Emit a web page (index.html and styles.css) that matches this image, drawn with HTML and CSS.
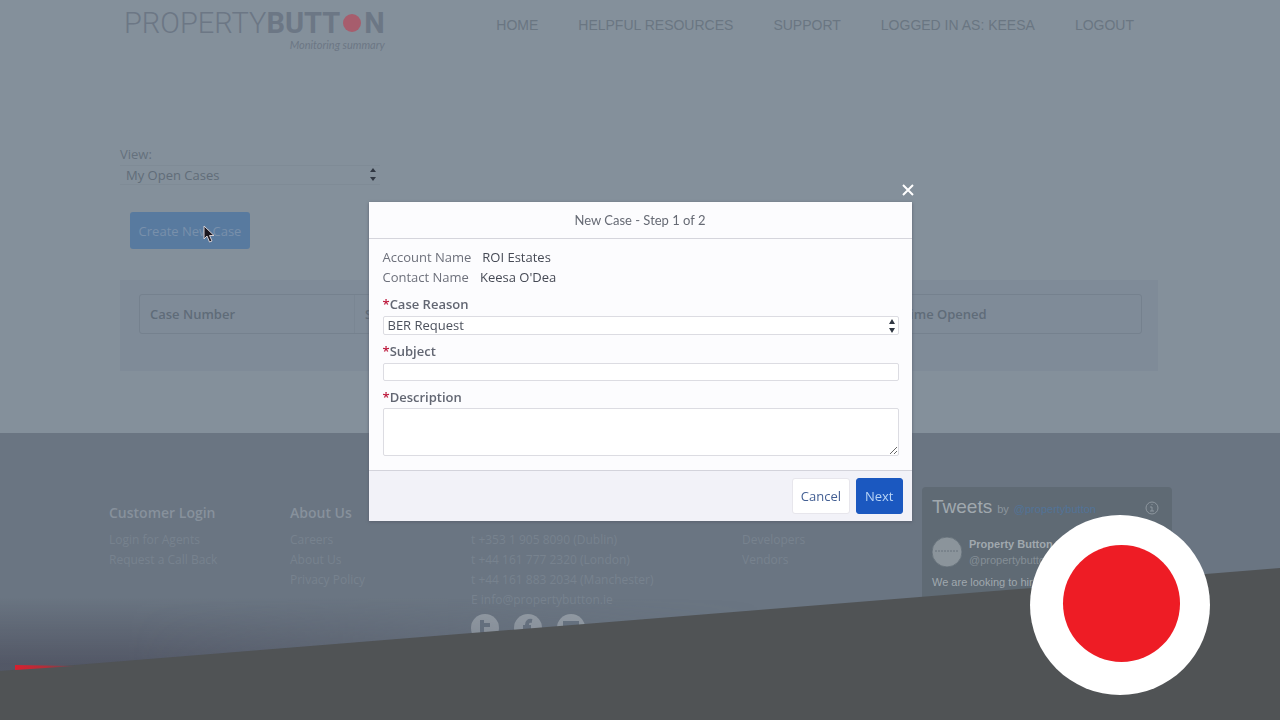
FILE: index.html
```html
<!DOCTYPE html>
<html lang="en">
<head>
<meta charset="utf-8">
<meta name="viewport" content="width=device-width, initial-scale=1">
<title>Property Button – New Case</title>
<link rel="stylesheet" href="styles.css">
</head>
<body>
<div class="page">
  <header class="wrap site-header">
    <a class="logo" href="#">
      <span class="logo-name"><span class="logo-light">PROPERTY</span><span class="logo-bold">BUTT</span><svg class="logo-dot" viewBox="0 0 24 24" aria-hidden="true"><circle cx="12" cy="12" r="9"/></svg><span class="logo-bold">N</span></span>
      <span class="logo-tag">Monitoring summary</span>
    </a>
    <nav class="nav">
      <a href="#">HOME</a><a href="#">HELPFUL RESOURCES</a><a href="#">SUPPORT</a><a href="#">LOGGED IN AS: KEESA</a><a href="#">LOGOUT</a>
    </nav>
  </header>

  <main class="wrap main">
    <label class="view-label" for="view">View:</label>
    <div class="select-box view-box">
      <select id="view" class="view-select"><option>My Open Cases</option></select>
      <svg class="arrows" viewBox="0 0 8 16" aria-hidden="true"><path d="M4 2l3 4H1zM4 15l3-4H1z"/></svg>
    </div>
    <div class="create-row">
      <button class="create" type="button">Create New Case</button>
      <svg class="cursor" viewBox="0 0 12 18" aria-hidden="true"><path d="M1 1v13l3-3 2.500 6 2.500-1-2.500-5.500H11z"/></svg>
    </div>
    <section class="panel">
      <table class="cases">
        <thead><tr><th class="col-number">Case Number</th><th class="col-subject">Subject</th><th>Date/Time Opened</th></tr></thead>
      </table>
    </section>
  </main>

  <footer class="footer">
    <div class="wrap footer-grid">
      <section>
        <h2>Customer Login</h2>
        <ul><li><a href="#">Login for Agents</a></li><li><a href="#">Request a Call Back</a></li></ul>
      </section>
      <section>
        <h2>About Us</h2>
        <ul><li><a href="#">Careers</a></li><li><a href="#">About Us</a></li><li><a href="#">Privacy Policy</a></li></ul>
      </section>
      <section class="untitled">
        <ul><li>t +353 1 905 8090 (Dublin)</li><li>t +44 161 777 2320 (London)</li><li>t +44 161 883 2034 (Manchester)</li><li>E info@propertybutton.ie</li></ul>
        <div class="social">
          <svg viewBox="0 0 28 28" aria-hidden="true"><circle class="disc" cx="14" cy="14" r="14"/><path class="mark" d="M11 6v11q0 4 4 4h4M11 11h8"/></svg>
          <svg viewBox="0 0 28 28" aria-hidden="true"><circle class="disc" cx="14" cy="14" r="14"/><path class="mark" d="M18 7q-5-1-5 4v11M9 13h8"/></svg>
          <svg viewBox="0 0 28 28" aria-hidden="true"><circle class="disc" cx="14" cy="14" r="14"/><path class="mark" d="M8 9h12v11H8zM8 9l6 5 6-5"/></svg>
        </div>
      </section>
      <section class="untitled">
        <ul><li><a href="#">Developers</a></li><li><a href="#">Vendors</a></li></ul>
      </section>
      <aside class="tweets">
        <div class="tweets-head">
          <span class="tweets-title">Tweets</span><span class="by">by</span><a class="handle" href="#">@propertybutton</a>
          <svg class="info" viewBox="0 0 14 14" aria-hidden="true"><circle cx="7" cy="7" r="6"/><path d="M7 3v1M5 6h2v4M5 10h4"/></svg>
        </div>
        <div class="author">
          <svg class="avatar" viewBox="0 0 30 30" aria-hidden="true"><circle cx="15" cy="15" r="15"/><path d="M3 14h24" stroke-dasharray="2 1"/></svg>
          <div><strong>Property Button</strong><span>@propertybutton</span></div>
        </div>
        <p>We are looking to hire</p>
      </aside>
    </div>
  </footer>
</div>

<div class="backdrop">
  <form class="modal" role="dialog" aria-labelledby="modal-title">
    <button class="close" type="button" aria-label="Close"><svg viewBox="0 0 14 14" aria-hidden="true"><path d="M2 2l10 10M12 2L2 12"/></svg></button>
    <header class="modal-head"><h1 id="modal-title">New Case - Step 1 of 2</h1></header>
    <div class="modal-body">
      <dl class="facts">
        <div><dt>Account Name</dt><dd>ROI Estates</dd></div>
        <div><dt>Contact Name</dt><dd>Keesa O'Dea</dd></div>
      </dl>
      <label for="reason"><span class="req">*</span>Case Reason</label>
      <div class="select-box">
        <select id="reason" class="field"><option>BER Request</option></select>
        <svg class="arrows" viewBox="0 0 8 16" aria-hidden="true"><path d="M4 1l3 5H1zM4 15l3-5H1z"/></svg>
      </div>
      <label for="subject"><span class="req">*</span>Subject</label>
      <input id="subject" class="field" type="text">
      <label for="description"><span class="req">*</span>Description</label>
      <textarea id="description" class="field area"></textarea>
    </div>
    <footer class="modal-foot">
      <button class="btn" type="button">Cancel</button>
      <button class="btn primary" type="button">Next</button>
    </footer>
  </form>
</div>

<div class="banner" aria-hidden="true">
  <div class="shade"></div>
  <svg class="wedge" viewBox="0 0 1280 152" preserveAspectRatio="none">
    <defs><linearGradient id="streak"><stop offset="0" stop-color="#d81f2e"/><stop offset=".5" stop-color="#b02f3a"/><stop offset="1" stop-color="#59505a"/></linearGradient></defs>
    <path d="M0 103L1280 0V152H0z" fill="#505355"/>
    <path d="M15 97L76 98L15 102z" fill="url(#streak)"/>
  </svg>
  <svg class="record" viewBox="0 0 180 180"><circle cx="90" cy="90" r="90" fill="#fff"/><circle cx="91.500" cy="88.500" r="58.500" fill="#ee1c25"/></svg>
</div>
</body>
</html>
```
FILE: styles.css
```css
* { box-sizing: border-box; }
body { margin: 0; background: #84909b; color: #65717d; font: 13px/20px "Open Sans", "Noto Sans", sans-serif; }
a { color: inherit; text-decoration: none; }
h1, h2, p, ul, dl, dd { margin: 0; padding: 0; }
ul { list-style: none; }
button, input, select, textarea { font: inherit; color: inherit; }

.page { height: 100vh; overflow: hidden; display: flex; flex-direction: column; }
.wrap { width: 100%; max-width: 1064px; margin: 0 auto; }

.site-header { display: flex; justify-content: space-between; align-items: flex-start; padding: 6px 38px 0 16px; }
.logo { display: flex; flex-direction: column; color: #6c7785; }
.logo-name { display: flex; align-items: center; font: 29px/34px Roboto, sans-serif; }
.logo-light { font-weight: 300; }
.logo-bold { font-weight: 700; }
.logo-dot { width: 24px; height: 24px; fill: #a75d6d; }
.logo-tag { align-self: flex-end; font: italic 11px/10px Lato, sans-serif; }
.nav { display: flex; gap: 40px; padding-top: 9px; font: 14px/20px "Liberation Sans", Arial, sans-serif; color: #6a7682; }

.main { padding: 94px 14px 62px 12px; }
.view-label { display: block; }
.select-box { position: relative; }
.view-box { width: 260px; padding-top: 1px; }
select { appearance: none; }
.view-select { display: block; width: 100%; height: 20px; padding: 0 6px; border: 1px solid #7f8b96; border-width: 1px 0; background: none; line-height: 18px; color: #616d79; }
.arrows { position: absolute; right: 3px; top: 2px; width: 8px; height: 16px; fill: #303742; pointer-events: none; }
.create-row { position: relative; padding: 27px 10px 31px; }
.create { display: block; width: 120px; height: 37px; padding: 0; border: 0; border-radius: 3px; background: #587a9f; color: #7890ab; }
.cursor { position: absolute; left: 83px; top: 40px; width: 12px; height: 18px; fill: #1b1720; stroke: #d5cfd3; }
.panel { padding: 14px 16px 37px 19px; background: #7f8b98; }
.cases { width: 100%; height: 40px; border: 1px solid #75818e; border-radius: 3px; border-spacing: 0; table-layout: fixed; }
.cases th { padding: 0 10px; text-align: left; font-weight: 600; color: #5f6c79; }
.col-number { width: 215px; border-right: 1px solid #7a8693; }
.col-subject { width: 503px; }

.footer { flex: 1; background: #6a7582; color: #77828e; }
.footer-grid { display: grid; grid-template-columns: 181fr 181fr 271fr 181fr 250fr; padding: 54px 0 0; }
.footer-grid section { padding: 16px 1px 0; }
.footer-grid .untitled { padding-top: 43px; }
h2 { margin-bottom: 7px; font-size: 14px; font-weight: 600; line-height: 20px; color: #87919c; }
.footer li { font-size: 12px; line-height: 20px; }
.social { display: flex; gap: 15px; padding-top: 4px; }
.social svg { width: 28px; height: 28px; }
.disc { fill: #949da6; }
.mark { fill: none; stroke: #687482; stroke-width: 4; }
.tweets { height: 160px; padding: 8px 10px; border-radius: 4px; background: #5f6a74; font: 11px/16px "Liberation Sans", Arial, sans-serif; color: #a0a8ae; }
.tweets-head { display: flex; align-items: baseline; gap: 5px; line-height: 24px; }
.tweets-title { font-size: 19px; }
.by { color: #8b959d; }
.handle { color: #527397; }
.info { width: 14px; height: 14px; margin: 0 3px 0 auto; align-self: center; fill: none; stroke: #8d969e; }
.author { display: flex; align-items: center; gap: 7px; padding: 15px 0 6px; }
.author strong, .author span { display: block; }
.author span { color: #848e96; }
.avatar { width: 30px; height: 30px; fill: #8b949b; stroke: #68737c; }
.tweets p { white-space: nowrap; }

.backdrop { position: fixed; inset: 0 0 -3px; display: grid; place-items: center; }
.modal { position: relative; width: min(543px, 94vw); background: #fcfcfe; box-shadow: 0 1px 3px #59606e; color: #4d525d; }
.close { position: absolute; right: -3px; top: -19px; width: 14px; height: 14px; padding: 0; border: 0; background: none; }
.close svg { display: block; fill: none; stroke: #fff; stroke-width: 2; }
.modal-head { padding: 8px 14px; border-bottom: 1px solid #d5d5dc; text-align: center; }
h1 { font: 400 13px/20px Lato, "Open Sans", sans-serif; color: #666a74; }
.modal-body { padding: 8px 13px 14px 14px; }
.facts { padding-bottom: 7px; }
.facts div { display: flex; gap: 11px; }
.facts dt { color: #6d707b; }
.facts dd { color: #464a55; }
.modal-body label { display: block; font-weight: 600; color: #626672; }
.req { color: #bd193c; }
.field { display: block; width: 100%; height: 19px; padding: 0 4px; border: 1px solid #dcdce2; border-radius: 2px; background: #fff; line-height: 17px; }
.modal-body .select-box { margin: 2px 0 6px; }
.modal-body input { height: 18px; margin: 2px 0 6px; }
.area { height: 48px; margin-top: 1px; resize: vertical; }
.modal-foot { display: flex; justify-content: flex-end; gap: 6px; padding: 7px 9px; border-top: 1px solid #d3d3db; background: #f2f2f8; }
.btn { height: 36px; padding: 0 8px; border: 1px solid #e7e6ec; border-radius: 3px; background: #fff; color: #435f93; }
.primary { border-color: #1b58c0; background: #1b58c0; color: #b8d4f6; }

.banner { position: fixed; inset: auto 0 0; height: 152px; pointer-events: none; }
.shade { position: absolute; inset: 0; background: linear-gradient(#4c506000 30px, #4b4e5dc0 96px); mask-image: linear-gradient(90deg, #000 10%, transparent 60%); }
.wedge { position: absolute; width: 100%; height: 100%; }
.record { position: absolute; right: 70px; bottom: 25px; width: 180px; height: 180px; }
```
